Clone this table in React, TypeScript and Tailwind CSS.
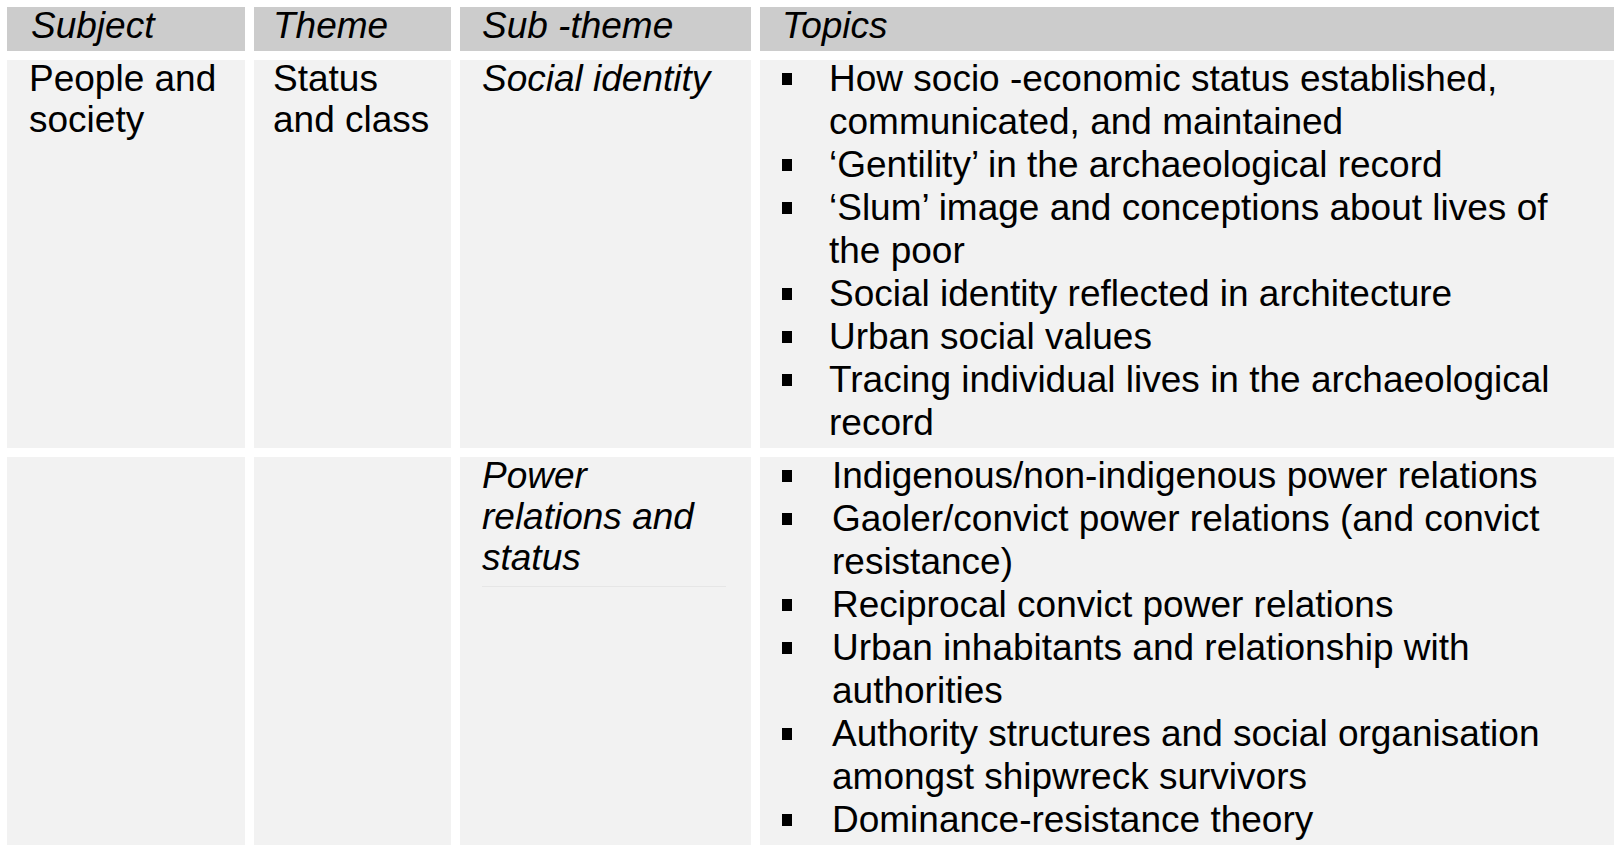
const FONT = "font-['Liberation_Sans',Arial,sans-serif]";

type Cell = { subject: string[]; theme: string[]; subtheme: string[]; topics: string[] };

const ROWS: Cell[] = [
  {
    subject: ["People and", "society"],
    theme: ["Status", "and class"],
    subtheme: ["Social identity"],
    topics: [
      "How socio -economic status established, communicated, and maintained",
      "\u2018Gentility\u2019 in the archaeological record",
      "\u2018Slum\u2019 image and conceptions about lives of the poor",
      "Social identity reflected in architecture",
      "Urban social values",
      "Tracing individual lives in the archaeological record",
    ],
  },
  {
    subject: [],
    theme: [],
    subtheme: ["Power", "relations and", "status"],
    topics: [
      "Indigenous/non-indigenous power relations",
      "Gaoler/convict power relations (and convict resistance)",
      "Reciprocal convict power relations",
      "Urban inhabitants and relationship with authorities",
      "Authority structures and social organisation amongst shipwreck survivors",
      "Dominance-resistance theory",
    ],
  },
];

function Lines({ lines }: { lines: string[] }) {
  return (
    <>
      {lines.map((l, i) => (
        <div key={i}>{l}</div>
      ))}
    </>
  );
}

export default function App() {
  return (
    <div className={`${FONT} bg-white text-black w-[1614px] h-[855px] pt-[7px] pl-[7px] text-[37px] leading-[41px]`}>
      <div className="grid grid-cols-[238px_197px_291px_1fr] gap-x-[9px] gap-y-[9px]">
        {/* header */}
        <div className="bg-[#cccccc] h-[44px] pl-[24px] italic leading-[37px]">Subject</div>
        <div className="bg-[#cccccc] h-[44px] pl-[19px] italic leading-[37px]">Theme</div>
        <div className="bg-[#cccccc] h-[44px] pl-[22px] italic leading-[37px]">Sub -theme</div>
        <div className="bg-[#cccccc] h-[44px] pl-[22px] italic leading-[37px]">Topics</div>

        {ROWS.map((r, ri) => (
          <div key={ri} className="contents">
            <div className="bg-[#f2f2f2] h-[388px] pl-[22px]">
              <div className="-mt-[2px]">
                <Lines lines={r.subject} />
              </div>
            </div>
            <div className="bg-[#f2f2f2] h-[388px] pl-[19px]">
              <div className="-mt-[2px]">
                <Lines lines={r.theme} />
              </div>
            </div>
            <div className="bg-[#f2f2f2] h-[388px] pl-[22px] pr-[25px] italic">
              <div className={ri === 1 ? "-mt-[2px] border-b border-[#e6e6e6] pb-[8px]" : "-mt-[2px]"}>
                <Lines lines={r.subtheme} />
              </div>
            </div>
            <div className="bg-[#f2f2f2] h-[388px] pl-[22px] pr-[20px]">
              <ul className="-mt-[3px] flex flex-col leading-[43px]">
                {r.topics.map((t, i) => (
                  <li key={i} className="flex">
                    <span className={`${ri === 1 ? "w-[50px]" : "w-[47px]"} shrink-0 pt-[16px]`}>
                      <span className="block w-[10px] h-[12px] bg-black" />
                    </span>
                    <span>{t}</span>
                  </li>
                ))}
              </ul>
            </div>
          </div>
        ))}
      </div>
    </div>
  );
}
